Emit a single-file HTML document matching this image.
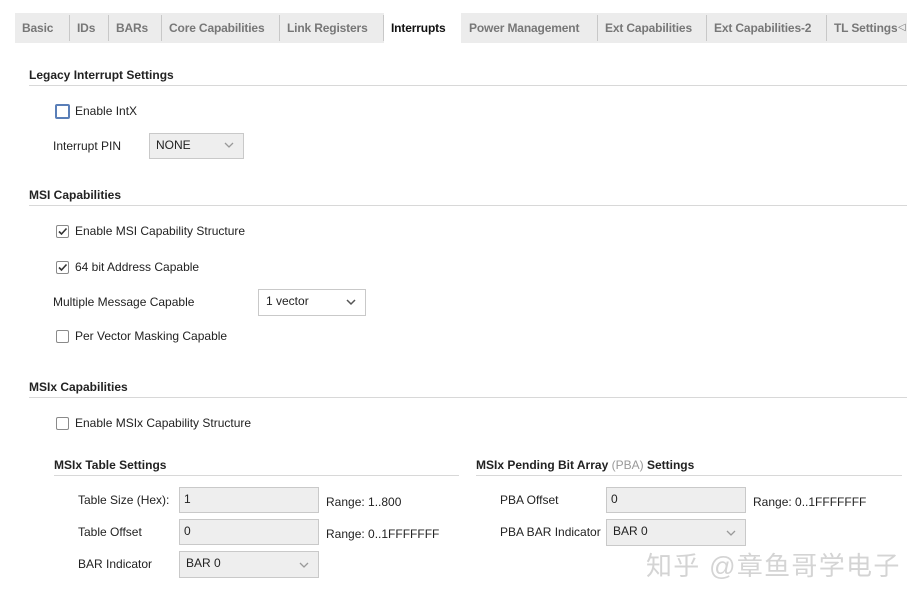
<!DOCTYPE html>
<html><head><meta charset="utf-8"><style>
body{margin:0;width:923px;height:602px;background:#fff;position:relative;overflow:hidden;font-family:"Liberation Sans",Arial,sans-serif;font-size:12px;color:#222}
.a{position:absolute;white-space:nowrap}
.tabs{position:absolute;left:15px;top:13px;width:892px;height:30px;background:#ececec}
.t{position:absolute;top:13px;height:30px;line-height:30px;color:#777;font-weight:bold;font-size:12px;letter-spacing:-0.15px;white-space:nowrap}
.sep{position:absolute;top:15px;width:1px;height:26px;background:#c8c8c8}
.h{position:absolute;font-weight:bold;font-size:12px;color:#222;white-space:nowrap}
.ln{position:absolute;height:1px;background:#d8d8d8}
.cb{position:absolute;width:11px;height:11px;border:1px solid #8a8a8a;border-radius:2px;background:#fff}
.box{position:absolute;background:#eeeeee;border:1px solid #c9c9c9;box-sizing:border-box;padding-left:6px;line-height:23px}
.box.w{background:#fff}
.chev{position:absolute;right:9px;top:8px}
</style></head><body>
<div class="tabs"></div>
<div class="a" style="left:384px;top:13px;width:77px;height:31px;background:#fff"></div>
<div class="t" style="left:22px">Basic</div><div class="sep" style="left:69px"></div>
<div class="t" style="left:77px">IDs</div><div class="sep" style="left:108px"></div>
<div class="t" style="left:116px">BARs</div><div class="sep" style="left:161px"></div>
<div class="t" style="left:169px">Core Capabilities</div><div class="sep" style="left:279px"></div>
<div class="t" style="left:287px">Link Registers</div><div class="sep" style="left:383px"></div>
<div class="t" style="left:391px;color:#111">Interrupts</div>
<div class="t" style="left:469px">Power Management</div><div class="sep" style="left:597px"></div>
<div class="t" style="left:605px">Ext Capabilities</div><div class="sep" style="left:706px"></div>
<div class="t" style="left:714px">Ext Capabilities-2</div><div class="sep" style="left:826px"></div>
<div class="t" style="left:834px;width:63px;overflow:hidden">TL Settings</div><div class="t" style="left:898px;font-weight:normal;font-size:10px">◁</div>

<div class="h" style="left:29px;top:68px">Legacy Interrupt Settings</div><div class="ln" style="left:29px;top:85px;width:878px"></div>
<div class="cb" style="left:55px;top:104px;border:2px solid #5a7fb8;width:11px;height:11px"></div>
<div class="a" style="left:75px;top:104px">Enable IntX</div>
<div class="a" style="left:53px;top:139px">Interrupt PIN</div>
<div class="box" style="left:149px;top:133px;width:95px;height:26px">NONE<svg class="chev" width="10" height="7"><path d="M1 1l4 4 4-4" fill="none" stroke="#999" stroke-width="1.3"/></svg></div>

<div class="h" style="left:29px;top:188px">MSI Capabilities</div><div class="ln" style="left:29px;top:205px;width:878px"></div>
<div class="cb" style="left:56px;top:225px"><svg width="11" height="11" style="position:absolute;left:0;top:0"><path d="M2 5.5l2.5 2.5 5-5.5" fill="none" stroke="#333" stroke-width="1.6"/></svg></div>
<div class="a" style="left:75px;top:224px">Enable MSI Capability Structure</div>
<div class="cb" style="left:56px;top:261px"><svg width="11" height="11" style="position:absolute;left:0;top:0"><path d="M2 5.5l2.5 2.5 5-5.5" fill="none" stroke="#333" stroke-width="1.6"/></svg></div>
<div class="a" style="left:75px;top:260px">64 bit Address Capable</div>
<div class="a" style="left:53px;top:295px">Multiple Message Capable</div>
<div class="box w" style="left:258px;top:289px;width:108px;height:27px;padding-left:7px">1 vector<svg class="chev" width="10" height="7" style="top:9px"><path d="M1 1l4 4 4-4" fill="none" stroke="#555" stroke-width="1.5"/></svg></div>
<div class="cb" style="left:56px;top:330px"></div>
<div class="a" style="left:75px;top:329px">Per Vector Masking Capable</div>

<div class="h" style="left:29px;top:380px">MSIx Capabilities</div><div class="ln" style="left:29px;top:397px;width:878px"></div>
<div class="cb" style="left:56px;top:417px"></div>
<div class="a" style="left:75px;top:416px">Enable MSIx Capability Structure</div>

<div class="h" style="left:54px;top:458px">MSIx Table Settings</div><div class="ln" style="left:54px;top:475px;width:405px"></div>
<div class="a" style="left:78px;top:493px">Table Size (Hex):</div>
<div class="box" style="left:179px;top:487px;width:140px;height:26px;padding-left:4px">1</div>
<div class="a" style="left:326px;top:495px">Range: 1..800</div>
<div class="a" style="left:78px;top:525px">Table Offset</div>
<div class="box" style="left:179px;top:519px;width:140px;height:26px;padding-left:4px">0</div>
<div class="a" style="left:326px;top:527px">Range: 0..1FFFFFFF</div>
<div class="a" style="left:78px;top:557px">BAR Indicator</div>
<div class="box" style="left:179px;top:551px;width:140px;height:27px">BAR 0<svg class="chev" width="10" height="7" style="top:10px"><path d="M1 1l4 4 4-4" fill="none" stroke="#999" stroke-width="1.3"/></svg></div>

<div class="h" style="left:476px;top:458px">MSIx Pending Bit Array <span style="color:#999;font-weight:normal">(PBA)</span> Settings</div><div class="ln" style="left:476px;top:475px;width:426px"></div>
<div class="a" style="left:500px;top:493px">PBA Offset</div>
<div class="box" style="left:606px;top:487px;width:140px;height:26px;padding-left:4px">0</div>
<div class="a" style="left:753px;top:495px">Range: 0..1FFFFFFF</div>
<div class="a" style="left:500px;top:525px">PBA BAR Indicator</div>
<div class="box" style="left:606px;top:519px;width:140px;height:27px">BAR 0<svg class="chev" width="10" height="7" style="top:10px"><path d="M1 1l4 4 4-4" fill="none" stroke="#999" stroke-width="1.3"/></svg></div>

<div class="a" style="left:646px;top:546px;font-size:26px;color:#d4d4d4;font-family:'Liberation Sans','Noto Sans CJK SC',sans-serif;letter-spacing:1.3px">知乎 @章鱼哥学电子</div>
</body></html>
